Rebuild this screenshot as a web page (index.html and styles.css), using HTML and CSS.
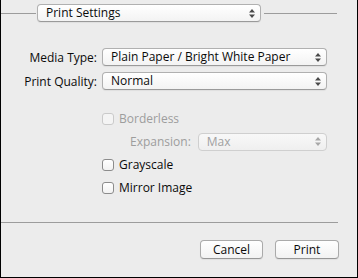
FILE: index.html
```html
<!DOCTYPE html>
<html>
<head>
<meta charset="utf-8">
<link rel="stylesheet" href="styles.css">
</head>
<body>
<div class="dialog">
  <div class="header">
    <div class="rule rule-left"></div>
    <div class="popup popup-title"><span class="popup-text">Print Settings</span><svg class="arrows" width="6" height="9" viewBox="0 0 6 9"><path d="M3 0 L6 3.5 L0 3.5 Z M0 5.5 L6 5.5 L3 9 Z" fill="#4a4a4a"/></svg></div>
    <div class="rule rule-right"></div>
  </div>

  <div class="form">
    <div class="label">Media Type:</div>
    <div class="popup"><span class="popup-text">Plain Paper / Bright White Paper</span><svg class="arrows" width="6" height="9" viewBox="0 0 6 9"><path d="M3 0 L6 3.5 L0 3.5 Z M0 5.5 L6 5.5 L3 9 Z" fill="#4a4a4a"/></svg></div>
    <div class="label">Print Quality:</div>
    <div class="popup"><span class="popup-text">Normal</span><svg class="arrows" width="6" height="9" viewBox="0 0 6 9"><path d="M3 0 L6 3.5 L0 3.5 Z M0 5.5 L6 5.5 L3 9 Z" fill="#4a4a4a"/></svg></div>
  </div>

  <div class="options">
    <div class="opt disabled"><span class="check"></span><span>Borderless</span></div>
    <div class="opt expansion disabled"><span class="exp-label">Expansion:</span><div class="popup popup-disabled"><span class="popup-text">Max</span><svg class="arrows" width="6" height="9" viewBox="0 0 6 9"><path d="M3 0 L6 3.5 L0 3.5 Z M0 5.5 L6 5.5 L3 9 Z" fill="#a8a8a8"/></svg></div></div>
    <div class="opt"><span class="check"></span><span>Grayscale</span></div>
    <div class="opt"><span class="check"></span><span>Mirror Image</span></div>
  </div>

  <div class="separator"></div>

  <div class="buttons">
    <div class="btn btn-cancel">Cancel</div>
    <div class="btn btn-print">Print</div>
  </div>
</div>
</body>
</html>
```

FILE: styles.css
```css
html, body {
  margin: 0;
  padding: 0;
  background: #ececec;
}

.dialog {
  box-sizing: border-box;
  width: 358px;
  height: 278px;
  border-left: 1px solid #000;
  border-right: 1px solid #000;
  border-bottom: 1px solid #000;
  background: #ececec;
  padding-top: 4px;
  font-family: "Open Sans", "Liberation Sans", sans-serif;
  font-size: 12px;
  font-weight: 500;
  color: #0a0a0a;
}

.header {
  display: flex;
  align-items: center;
  height: 18px;
  padding-right: 20px;
}

.rule {
  height: 1px;
  background: #9c9c9c;
}

.rule-left {
  width: 35px;
  margin-right: 1px;
}

.rule-right {
  flex: 1;
  margin-left: 3px;
}

.popup {
  box-sizing: border-box;
  height: 18px;
  display: flex;
  align-items: center;
  justify-content: space-between;
  padding: 0 5px 0 8px;
  background: linear-gradient(#ffffff, #f3f3f3);
  border: 1px solid #b0b0b0;
  border-bottom-color: #9a9a9a;
  border-radius: 4px;
  box-shadow: 0 1px 1px rgba(0, 0, 0, 0.06);
  line-height: 16px;
  white-space: nowrap;
}

.popup-title {
  width: 224px;
  padding-left: 8px;
}

.arrows {
  flex: none;
  display: block;
}

.form {
  display: grid;
  grid-template-columns: 96px 225px;
  column-gap: 5px;
  row-gap: 6px;
  margin-top: 26px;
  align-items: center;
}

.label {
  text-align: right;
  white-space: nowrap;
}

.options {
  margin-top: 17px;
  padding-left: 101px;
  display: flex;
  flex-direction: column;
}

.opt {
  height: 23px;
  display: flex;
  align-items: center;
  gap: 5px;
}

.check {
  box-sizing: border-box;
  width: 12px;
  height: 12px;
  border: 1px solid #8c8c8c;
  border-radius: 3px;
  background: linear-gradient(#ffffff, #f2f2f2);
  flex: none;
}

.disabled {
  color: #9d9d9d;
}

.disabled .check {
  border-color: #cacaca;
  background: #f4f4f4;
}

.expansion {
  padding-left: 28px;
  gap: 7px;
}

.popup-disabled {
  width: 129px;
  background: linear-gradient(#f8f8f8, #efefef);
  border-color: #cfcfcf;
  color: #a0a0a0;
  box-shadow: none;
}

.separator {
  margin-top: 23px;
  width: 337px;
  height: 1px;
  background: #9c9c9c;
}

.buttons {
  margin-top: 17px;
  display: flex;
  justify-content: flex-end;
  gap: 12px;
  padding-right: 18px;
}

.btn {
  box-sizing: border-box;
  height: 19px;
  line-height: 17px;
  text-align: center;
  background: linear-gradient(#ffffff, #f2f2f2);
  border: 1px solid #aaaaaa;
  border-bottom-color: #969696;
  border-radius: 4px;
  box-shadow: 0 1px 1px rgba(0, 0, 0, 0.06);
}

.btn-cancel {
  width: 63px;
}

.btn-print {
  width: 64px;
}
```
